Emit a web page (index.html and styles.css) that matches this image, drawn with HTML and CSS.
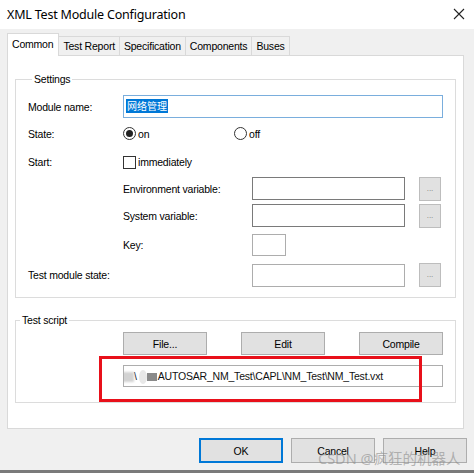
FILE: index.html
```html
<!DOCTYPE html>
<html lang="en">
  <head>
    <meta charset="UTF-8" />
    <meta name="viewport" content="width=device-width, initial-scale=1.0" />
    <title>XML Test Module Configuration</title>
    <link rel="stylesheet" href="styles.css">
  </head>
  <body>
    <div class="dialog">
      <div class="titlebar">
        <span class="title">XML Test Module Configuration</span>
        <svg class="close" width="12" height="12" viewBox="0 0 12 12">
          <path d="M1 1 L11 11 M11 1 L1 11" stroke="#222" stroke-width="1.1" fill="none" />
        </svg>
      </div>

      <div class="client">
        <div class="tabs">
          <div class="tab active">Common</div>
          <div class="tab">Test Report</div>
          <div class="tab">Specification</div>
          <div class="tab">Components</div>
          <div class="tab">Buses</div>
        </div>

        <div class="panel">
          <fieldset class="group settings">
            <legend>Settings</legend>
            <div class="settings-grid">
              <span class="lbl">Module name:</span>
              <div class="field wide focus"><span class="sel">网络管理</span></div>

              <span class="lbl">State:</span>
              <div class="radios">
                <span class="radio-item first"><span class="radio checked"></span>on</span>
                <span class="radio-item"><span class="radio"></span>off</span>
              </div>

              <span class="lbl">Start:</span>
              <div class="radios">
                <span class="radio-item"><span class="check"></span>immediately</span>
              </div>

              <span class="sub">Environment variable:</span>
              <div class="field dark"></div>
              <button class="dots">...</button>

              <span class="sub">System variable:</span>
              <div class="field dark"></div>
              <button class="dots">...</button>

              <span class="sub">Key:</span>
              <div class="field key"></div>

              <span class="lbl">Test module state:</span>
              <div class="field state"></div>
              <button class="dots">...</button>
            </div>
          </fieldset>

          <fieldset class="group script">
            <legend>Test script</legend>
            <div class="script-body">
              <div class="script-buttons">
                <button class="btn">File...</button>
                <button class="btn">Edit</button>
                <button class="btn">Compile</button>
              </div>
              <div class="field path">
                <span class="smudge light"></span>\<span class="smudge round"></span><span class="smudge dark-block"></span>AUTOSAR_NM_Test\CAPL\NM_Test\NM_Test.vxt
              </div>
            </div>
          </fieldset>

          <div class="highlight"></div>
        </div>

        <div class="footer">
          <button class="btn default">OK</button>
          <button class="btn">Cancel</button>
          <button class="btn">Help</button>
        </div>
      </div>

      <div class="watermark">CSDN @疯狂的机器人</div>
    </div>
    <div class="taskbar"></div>
  </body>
</html>
```

FILE: styles.css
```css
/* Global */
body {
  margin: 0;
  font-family: "Liberation Sans", Arial, sans-serif;
  font-size: 10.5px;
  letter-spacing: -0.2px;
  color: #000;
  background-color: #8c8c8c;
}

.dialog {
  position: relative;
  width: 474px;
  height: 470px;
  background-color: #f0f0f0;
  display: flex;
  flex-direction: column;
}

/* Title bar */
.titlebar {
  height: 28px;
  background-color: #fff;
  display: flex;
  align-items: center;
  justify-content: space-between;
  padding: 0 9px 1px 7px;
}

.title {
  font-family: "Noto Sans", "Open Sans", sans-serif;
  font-size: 12.5px;
  letter-spacing: -0.2px;
  color: #000;
}

/* Client area */
.client {
  padding: 5px 10px 0 7px;
}

.tabs {
  display: flex;
  align-items: flex-end;
  height: 22px;
  margin-bottom: -1px;
}

.tab {
  height: 19px;
  line-height: 18px;
  padding: 0 4px 0 4px;
  border: 1px solid #d9d9d9;
  border-bottom: none;
  border-left: none;
  background-color: #f0f0f0;
}

.tab.active {
  position: relative;
  z-index: 1;
  height: 22px;
  line-height: 20px;
  padding: 0 5px 0 4px;
  background-color: #fff;
  border-left: 1px solid #d9d9d9;
}

.panel {
  position: relative;
  height: 374px;
  box-sizing: border-box;
  background-color: #fff;
  border: 1px solid #d9d9d9;
  padding: 16px 7px 0 7px;
}

/* Group boxes */
.group {
  margin: 0;
  border: 1px solid #dcdcdc;
  padding: 8px 0 7px 12px;
}

.group legend {
  padding: 0 2px;
  margin-left: 4px;
  line-height: 14px;
}

.settings-grid {
  display: grid;
  grid-template-columns: 95px 129px 153px 14px 22px;
  grid-template-rows: 25px 29px 28px 25px 29px 30px 30px;
  align-items: center;
}

.lbl {
  grid-column: 1;
}

.sub {
  grid-column: 2;
}

.field {
  box-sizing: border-box;
  height: 23px;
  background-color: #fff;
  border: 1px solid #adadad;
}

.field.wide {
  grid-column: 2 / -1;
  width: 320px;
}

.field.focus {
  border-color: #7aaedd;
  padding: 3px 0 0 2px;
}

.sel {
  display: inline-block;
  background-color: #0078d7;
  color: #fff;
  font-family: "Noto Sans CJK SC", sans-serif;
  font-size: 10px;
  letter-spacing: 0;
  line-height: 14px;
  padding: 0 1px;
}

.field.dark {
  grid-column: 3;
  border-color: #7a7a7a;
}

.field.key {
  grid-column: 3;
  width: 34px;
  height: 22px;
}

.field.state {
  grid-column: 3;
}

.dots {
  grid-column: 5;
  width: 22px;
  height: 24px;
  padding: 0 0 1px 0;
  border: 1px solid #bdbdbd;
  background-color: #e1e1e1;
  color: #7a7a7a;
  font-size: 8px;
  letter-spacing: 0;
  font-family: "Liberation Sans", sans-serif;
}

.radios {
  grid-column: 2 / -1;
  display: flex;
  align-items: center;
}

.radio-item {
  display: flex;
  align-items: center;
  gap: 2px;
}

.radio-item.first {
  width: 111px;
}

.radio {
  width: 13px;
  height: 13px;
  box-sizing: border-box;
  border: 1px solid #333;
  border-radius: 50%;
  display: flex;
  align-items: center;
  justify-content: center;
}

.radio.checked::after {
  content: "";
  width: 7px;
  height: 7px;
  border-radius: 50%;
  background-color: #222;
}

.check {
  width: 13px;
  height: 13px;
  box-sizing: border-box;
  border: 1px solid #333;
  background-color: #fff;
}

/* Test script */
.group.script {
  margin-top: 15px;
  padding: 5px 0 15px 0;
}

.script-body {
  margin-left: 107px;
  width: 320px;
  display: flex;
  flex-direction: column;
  gap: 10px;
}

.script-buttons {
  display: flex;
  justify-content: space-between;
}

.btn {
  width: 84px;
  height: 23px;
  padding: 0;
  border: 1px solid #adadad;
  background-color: #e1e1e1;
  font-family: "Liberation Sans", Arial, sans-serif;
  font-size: 10.5px;
  letter-spacing: -0.2px;
  color: #000;
}

.field.path {
  height: 22px;
  line-height: 20px;
  padding-left: 0;
  white-space: nowrap;
  overflow: hidden;
  color: #111;
}

.smudge {
  display: inline-block;
  vertical-align: middle;
  height: 10px;
}

.smudge.light {
  width: 12px;
  margin-left: -2px;
  background-color: #d2d2d2;
  filter: blur(1px);
}

.smudge.round {
  width: 8px;
  height: 14px;
  border-radius: 50%;
  margin-left: 2px;
  background-color: #e8e8e8;
}

.smudge.dark-block {
  width: 10px;
  height: 8px;
  background-color: #8a8a8a;
  margin-right: 1px;
}

/* Red annotation box */
.highlight {
  position: absolute;
  left: 91px;
  top: 300px;
  width: 323px;
  height: 46px;
  box-sizing: border-box;
  border: 3px solid #e8101a;
}

/* Footer buttons */
.footer {
  display: flex;
  justify-content: flex-end;
  gap: 8px;
  margin-top: 9px;
  margin-right: -3px;
}

.footer .btn {
  height: 25px;
}

.btn.default {
  border: 2px solid #0078d7;
}

.watermark {
  position: absolute;
  left: 318px;
  top: 447px;
  font-family: "Noto Sans", "Noto Sans CJK SC", sans-serif;
  font-size: 14.5px;
  letter-spacing: 0;
  color: rgba(140, 140, 140, 0.6);
  white-space: nowrap;
}

.taskbar {
  height: 3px;
  background-color: #7a7a7a;
}
```
